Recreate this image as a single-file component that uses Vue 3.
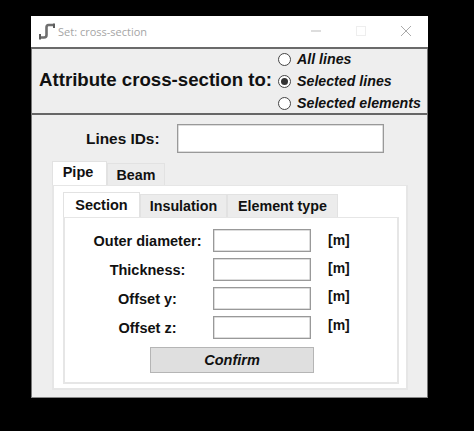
<script setup>
const fields = [
  { label: 'Outer diameter:' },
  { label: 'Thickness:' },
  { label: 'Offset y:' },
  { label: 'Offset z:' },
]
const radios = [
  { label: 'All lines', checked: false },
  { label: 'Selected lines', checked: true },
  { label: 'Selected elements', checked: false },
]
</script>

<template>
  <div class="page">
    <div class="window">
      <div class="titlebar">
        <svg class="logo" width="16" height="17" viewBox="0 0 16 17" fill="none">
          <path d="M1 14.5 H5 C6.5 14.5 7.5 13.5 7.5 12 V4.5 C7.5 3 8 2 9.5 2 H14.5" stroke="#6f6f6f" stroke-width="2.6" />
          <path d="M1 11 V16.5 M15 0.5 V5" stroke="#5c5c5c" stroke-width="2" />
        </svg>
        <span class="title">Set: cross-section</span>
        <div class="controls">
          <svg width="12" height="12" viewBox="0 0 12 12"><path d="M1 6 H11" stroke="#bbb" /></svg>
          <svg width="12" height="12" viewBox="0 0 12 12"><rect x="1.5" y="1.5" width="9" height="9" fill="none" stroke="#eee" /></svg>
          <svg width="12" height="12" viewBox="0 0 12 12"><path d="M1 1 L11 11 M11 1 L1 11" stroke="#aaa" /></svg>
        </div>
      </div>

      <div class="header">
        <span class="attr">Attribute cross-section to:</span>
        <div class="radios">
          <div v-for="r in radios" :key="r.label" class="radio-row">
            <span class="radio" :class="{ checked: r.checked }"></span>
            <span>{{ r.label }}</span>
          </div>
        </div>
      </div>

      <div class="body">
        <div class="ids">
          <span class="ids-label">Lines IDs:</span>
          <div class="input ids-input"></div>
        </div>

        <div class="tabs outer-tabs">
          <div class="tab active pipe">Pipe</div>
          <div class="tab beam">Beam</div>
        </div>
        <div class="outer-pane">
          <div class="tabs inner-tabs">
            <div class="tab active section">Section</div>
            <div class="tab insulation">Insulation</div>
            <div class="tab element">Element type</div>
          </div>
          <div class="inner-pane">
            <div class="grid">
              <template v-for="f in fields" :key="f.label">
                <span class="f-label">{{ f.label }}</span>
                <div class="input f-input"></div>
                <span class="unit">[m]</span>
              </template>
            </div>
            <button class="confirm">Confirm</button>
          </div>
        </div>
      </div>
    </div>
  </div>
</template>

<style scoped>
.page {
  width: 474px;
  height: 431px;
  background: #000;
  padding: 16px 0 0 31px;
  box-sizing: border-box;
  font-family: "Liberation Sans", Arial, sans-serif;
  color: #111;
}
.window {
  width: 397px;
  height: 382px;
  background: #eeeeee;
  border-right: 1px solid #777;
  border-left: 1px solid #777;
  border-bottom: 1px solid #888;
  box-sizing: border-box;
  display: flex;
  flex-direction: column;
}
.titlebar {
  height: 31px;
  flex: none;
  background: #fff;
  margin: 0 -1px;
  border-bottom: 2px solid #6a6a6a;
  box-sizing: content-box;
  display: flex;
  align-items: center;
  padding-left: 8px;
}
.logo { margin-right: 3px; margin-top: -1px; }
.title {
  font-family: "Open Sans", sans-serif;
  font-size: 11px;
  color: #a5a5a5;
}
.controls {
  margin-left: auto;
  display: flex;
  gap: 33px;
  margin-right: 16px;
  margin-top: -2px;
}
.controls svg { display: block; }
.header {
  height: 67px;
  flex: none;
  display: flex;
  align-items: center;
  border-bottom: 2px solid #666;
  padding-left: 7px;
  box-sizing: border-box;
  margin-top: -1px;
}
.attr {
  font-size: 18.65px;
  font-weight: 700;
  white-space: nowrap;
  margin-top: -2px;
}
.radios {
  margin-left: 6px;
  display: flex;
  flex-direction: column;
  gap: 0;
  margin-top: 1px;
}
.radio-row {
  height: 22px;
  display: flex;
  align-items: center;
  gap: 6px;
  font-size: 14.2px;
  font-weight: 700;
  font-style: italic;
  white-space: nowrap;
}
.radio {
  width: 13px;
  height: 13px;
  box-sizing: border-box;
  border: 1px solid #444;
  border-radius: 50%;
  background: #fff;
  display: flex;
  align-items: center;
  justify-content: center;
}
.radio.checked::after {
  content: "";
  width: 7px;
  height: 7px;
  border-radius: 50%;
  background: #333;
}
.body {
  flex: 1;
  display: flex;
  flex-direction: column;
  padding: 9px 19px 7px 20px;
}
.ids {
  display: flex;
  align-items: center;
  height: 29px;
  flex: none;
}
.ids-label {
  font-size: 15.4px;
  font-weight: 700;
  margin-left: 34px;
  width: 91px;
}
.input {
  background: #fff;
  border: 1px solid #999;
  box-shadow: inset 0 0 0 0.5px #bbb;
  box-sizing: border-box;
}
.ids-input {
  width: 207px;
  height: 29px;
}
.tabs {
  display: flex;
  align-items: flex-end;
  flex: none;
}
.outer-tabs {
  height: 24px;
  margin-top: 8px;
}
.tab {
  box-sizing: border-box;
  background: #ececec;
  border: 1px solid #e2e2e2;
  border-bottom: 0;
  display: flex;
  align-items: center;
  justify-content: center;
  font-size: 14.3px;
  font-weight: 700;
}
.tab.active {
  background: #fff;
  font-size: 14.5px;
}
.pipe {
  width: 55px;
  height: 24px;
  padding: 0 3px 3px 0;
  position: relative;
  z-index: 1;
}
.beam { width: 58px; height: 22px; }
.outer-pane {
  flex: 1;
  background: #fff;
  border: 2px solid #e6e6e6;
  border-top-width: 1px;
  box-sizing: border-box;
  width: 356px;
  padding: 6px 7px 4px 9px;
  display: flex;
  flex-direction: column;
}
.inner-tabs { height: 25px; }
.section {
  width: 77px;
  height: 25px;
  padding-bottom: 1px;
  position: relative;
  z-index: 1;
}
.insulation { width: 87px; height: 23px; }
.element { width: 111px; height: 23px; }
.inner-pane {
  flex: 1;
  border: 2px solid #e6e6e6;
  border-top-width: 1px;
  background: #fff;
  display: flex;
  flex-direction: column;
  align-items: flex-start;
  padding-top: 11px;
}
.grid {
  display: grid;
  grid-template-columns: 134px 98px auto;
  grid-auto-rows: 23px;
  row-gap: 6px;
  margin-left: 14px;
  align-items: center;
}
.f-label {
  font-size: 14.5px;
  font-weight: 700;
  text-align: center;
  margin-left: 3px;
  white-space: nowrap;
}
.f-input { height: 23px; }
.unit {
  font-size: 14px;
  font-weight: 700;
  margin-left: 17px;
  margin-top: -2px;
}
.unit:nth-child(6) { margin-top: -3px; }
.unit:nth-child(9) { margin-top: -5px; }
.unit:nth-child(12) { margin-top: -5px; }
.confirm {
  margin: 8px 0 0 85px;
  width: 164px;
  height: 26px;
  background: #dfdfdf;
  border: 1px solid #b5b5b5;
  font-family: inherit;
  font-size: 14.5px;
  font-weight: 700;
  font-style: italic;
  color: #111;
  padding: 0;
}
</style>
<style>
html, body { margin: 0; background: #000; }
</style>
